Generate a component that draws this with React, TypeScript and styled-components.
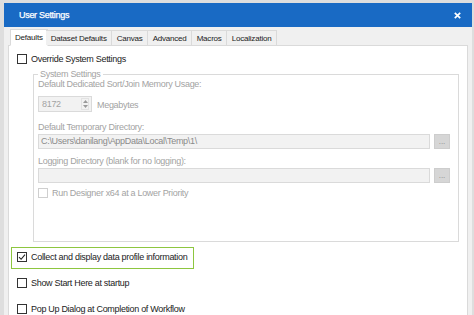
import React, { FC } from 'react';
import styled, { createGlobalStyle } from 'styled-components';

const COLORS = {
  frame: '#dedede',
  face: '#f0f0f0',
  blue: '#196ac4',
  text: '#222',
  disabled: '#a3a3a3',
  line: '#dadada',
  green: '#8dc63f',
};

const FONT = `"Liberation Sans", Arial, sans-serif`;

const GlobalStyle = createGlobalStyle`
  html, body {
    margin: 0;
    padding: 0;
    background: ${COLORS.frame};
  }
  * {
    box-sizing: border-box;
  }
`;

interface checkProps {
  label: string;
  checked?: boolean;
  disabled?: boolean;
  highlight?: boolean;
}

const CheckRow: FC<checkProps> = ({ label, checked, disabled, highlight }) => {
  return (
    <StyledCheckRow $highlight={highlight}>
      <Box $disabled={disabled}>
        {checked && (
          <svg width="8" height="8" viewBox="0 0 8 8">
            <path d="M1 4.2 L3.1 6.3 L7 1.6" fill="none" stroke="#222" strokeWidth="1.1" />
          </svg>
        )}
      </Box>
      <CheckLabel $disabled={disabled}>{label}</CheckLabel>
    </StyledCheckRow>
  );
};

const TABS = ['Defaults', 'Dataset Defaults', 'Canvas', 'Advanced', 'Macros', 'Localization'];

const App: FC = () => {
  return (
    <>
      <GlobalStyle />
      <Window>
        <TitleBar>
          <Title>User Settings</Title>
          <svg width="7" height="7" viewBox="0 0 7 7">
            <path d="M0.8 0.8 L6.2 6.2 M6.2 0.8 L0.8 6.2" stroke="#fff" strokeWidth="1.7" />
          </svg>
        </TitleBar>
        <Body>
          <TabStrip>
            {TABS.map((tab, i) => (
              <Tab key={tab} $active={i === 0}>{tab}</Tab>
            ))}
          </TabStrip>
          <TabPage>
            <CheckRow label="Override System Settings" />
            <Group>
              <Legend>System Settings</Legend>
              <FieldLabel>Default Dedicated Sort/Join Memory Usage:</FieldLabel>
              <SpinRow>
                <Spinner>
                  <SpinValue>8172</SpinValue>
                  <SpinButtons>
                    <svg width="5" height="3" viewBox="0 0 5 3"><path d="M0 3 L2.5 0 L5 3 Z" fill="#9a9a9a" /></svg>
                    <svg width="5" height="3" viewBox="0 0 5 3"><path d="M0 0 L2.5 3 L5 0 Z" fill="#9a9a9a" /></svg>
                  </SpinButtons>
                </Spinner>
                <FieldLabel>Megabytes</FieldLabel>
              </SpinRow>
              <FieldLabel $gap={9}>Default Temporary Directory:</FieldLabel>
              <PathRow>
                <PathInput>C:\Users\danilang\AppData\Local\Temp\1\</PathInput>
                <BrowseButton>...</BrowseButton>
              </PathRow>
              <FieldLabel $gap={6}>Logging Directory (blank for no logging):</FieldLabel>
              <PathRow>
                <PathInput />
                <BrowseButton>...</BrowseButton>
              </PathRow>
              <GroupCheck>
                <CheckRow label="Run Designer x64 at a Lower Priority" disabled />
              </GroupCheck>
            </Group>
            <BottomOptions>
              <CheckRow label="Collect and display data profile information" checked highlight />
              <CheckRow label="Show Start Here at startup" />
              <CheckRow label="Pop Up Dialog at Completion of Workflow" />
            </BottomOptions>
          </TabPage>
        </Body>
      </Window>
    </>
  );
};

const Window = styled.div`
  width: 474px;
  height: 315px;
  overflow: hidden;
  display: flex;
  flex-direction: column;
  padding: 3px 2px 0 4px;
  background: ${COLORS.frame};
  font-family: ${FONT};
  font-size: 9px;
  letter-spacing: -0.3px;
  color: ${COLORS.text};
`;

const TitleBar = styled.div`
  flex: 0 0 24px;
  display: flex;
  align-items: center;
  justify-content: space-between;
  padding: 0 11px 0 15px;
  background: ${COLORS.blue};
`;

const Title = styled.span`
  font-size: 9px;
  color: #fff;
  letter-spacing: -0.3px;
  -webkit-text-stroke: 0.25px #fff;
`;

const Body = styled.div`
  flex: 1;
  display: flex;
  flex-direction: column;
  padding: 2px 4px 0 4px;
  background: ${COLORS.face};
`;

const TabStrip = styled.div`
  display: flex;
  align-items: flex-end;
  height: 17px;
  padding-left: 2px;
  position: relative;
  z-index: 1;
`;

const Tab = styled.div<{ $active?: boolean }>`
  display: flex;
  align-items: center;
  height: ${({ $active }) => ($active ? '17px' : '15px')};
  margin: ${({ $active }) => ($active ? '0 -2px 0 0' : '0 0 1px 0')};
  padding: ${({ $active }) => ($active ? '0 4px 0 4px' : '0 4px 0 5px')};
  font-size: 8px;
  letter-spacing: -0.2px;
  background: ${({ $active }) => ($active ? '#fff' : '#f0f0f0')};
  border: 1px solid ${COLORS.line};
  border-bottom: ${({ $active }) => ($active ? '1px solid #fff' : 'none')};
  & + & {
    border-left: ${({ $active }) => ($active ? `1px solid ${COLORS.line}` : 'none')};
  }
`;

const TabPage = styled.div`
  flex: 1;
  display: flex;
  flex-direction: column;
  margin-top: -1px;
  padding: 5px 8px 0 8px;
  background: #fff;
  border: 1px solid ${COLORS.line};
  border-bottom: none;
`;

const StyledCheckRow = styled.div<{ $highlight?: boolean }>`
  position: relative;
  display: flex;
  align-items: center;
  gap: 4px;
  height: 16px;
  align-self: flex-start;

  &::after {
    content: '';
    display: ${({ $highlight }) => ($highlight ? 'block' : 'none')};
    position: absolute;
    top: -2px;
    bottom: -4px;
    left: -6px;
    right: -7px;
    border: 1.5px solid ${COLORS.green};
  }
`;

const Box = styled.span<{ $disabled?: boolean }>`
  display: flex;
  align-items: center;
  justify-content: center;
  width: 10px;
  height: 10px;
  background: #fff;
  border: 1px solid ${({ $disabled }) => ($disabled ? '#cfcfcf' : '#333')};
`;

const CheckLabel = styled.span<{ $disabled?: boolean }>`
  color: ${({ $disabled }) => ($disabled ? COLORS.disabled : COLORS.text)};
  white-space: nowrap;
`;

const Group = styled.fieldset`
  margin: 1px 0 0 16px;
  padding: 0 8px 40px 4px;
  border: 1px solid ${COLORS.line};
  display: flex;
  flex-direction: column;
  min-width: 0;
`;

const Legend = styled.legend`
  padding: 0 2px;
  margin-left: 0;
  line-height: 12px;
  color: ${COLORS.disabled};
`;

const FieldLabel = styled.div<{ $gap?: number }>`
  margin-top: ${({ $gap }) => ($gap ?? -2)}px;
  line-height: 12px;
  color: ${COLORS.disabled};
  white-space: nowrap;
`;

const SpinRow = styled.div`
  display: flex;
  align-items: center;
  gap: 5px;
  margin-top: 6px;

  & > ${FieldLabel} {
    margin-top: 2px;
  }
`;

const Spinner = styled.div`
  display: flex;
  align-items: center;
  justify-content: space-between;
  width: 54px;
  height: 16px;
  padding: 0 2px 0 3px;
  background: #f2f2f2;
  border: 1px solid ${COLORS.line};
`;

const SpinValue = styled.span`
  color: ${COLORS.disabled};
`;

const SpinButtons = styled.span`
  display: flex;
  flex-direction: column;
  justify-content: center;
  gap: 2px;
  width: 8px;
  height: 12px;
  align-items: center;
  border: 1px solid #e2e2e2;
`;

const PathRow = styled.div`
  display: flex;
  align-items: center;
  gap: 4px;
  margin-top: 1px;
`;

const PathInput = styled.div`
  flex: 1;
  height: 15px;
  padding: 0 2px;
  line-height: 13px;
  color: #8a8a8a;
  background: #f2f2f2;
  border: 1px solid ${COLORS.line};
  white-space: nowrap;
`;

const BrowseButton = styled.div`
  width: 16px;
  height: 15px;
  display: flex;
  align-items: center;
  justify-content: center;
  font-size: 8px;
  line-height: 8px;
  letter-spacing: 0;
  color: #8a8a8a;
  background: #d6d6d6;
  border: 1px solid #cdcdcd;
`;

const GroupCheck = styled.div`
  margin-top: 2px;
`;

const BottomOptions = styled.div`
  display: flex;
  flex-direction: column;
  gap: 10px;
  margin-top: 7px;
`;

export default App;
